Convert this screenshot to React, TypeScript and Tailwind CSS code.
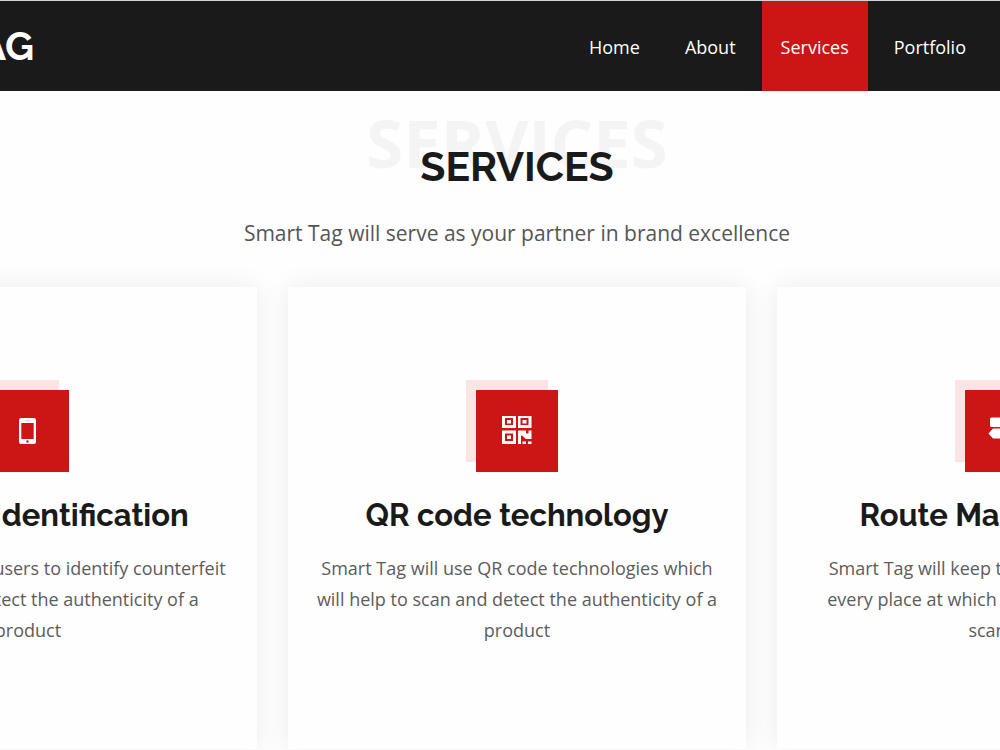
import type { ReactNode } from "react";

const heading = "font-['Raleway','Lato',sans-serif] font-bold";

const links = ["Home", "About", "Services", "Portfolio"];

function PhoneIcon() {
  return (
    <svg viewBox="0 0 30 30" className="size-[30px]" aria-hidden="true">
      <path
        fill="#fff"
        fillRule="evenodd"
        d="M8 2h12.900Q23 2 23 4.200V25.800Q23 28 20.900 28H8Q6 28 6 25.800V4.200Q6 2 8 2ZM8.300 7V23H20.700V7ZM14.500 24.300a1.200 1.200 0 1 0 0 2.400a1.200 1.200 0 1 0 0-2.400Z"
      />
      <path stroke="#f3b9b9" strokeWidth="0.8" d="M12.200 4.500h4.600" />
    </svg>
  );
}

function QrIcon() {
  return (
    <svg viewBox="0 0 30 30" className="size-[30px]" aria-hidden="true">
      <path
        fill="#fff"
        fillRule="evenodd"
        d="M0 -1H14V12H0ZM3 2V9H11V2ZM5 4H9V7.500H5ZM16 -1H29.500V12H16ZM18.500 2V9H26.500V2ZM20.500 4H24.500V7.500H20.500ZM0 14.500H14V28H0ZM3 17.500V25H11V17.500ZM5 19.500H9V23H5ZM16 14.500H24V17.500H26.500V14.500H29.500V23H24L20 19.500H19V28H16ZM20.500 25.500H24V28H20.500ZM26 25.500H29.500V28H26Z"
      />
    </svg>
  );
}

function SignsIcon() {
  return (
    <svg viewBox="0 0 36 30" className="h-[30px] w-[36px]" aria-hidden="true">
      <path
        fill="#fff"
        d="M16 0h4v1.500h10l5 4.750-5 4.750H3.500Q2 11 2 9.500V3Q2 1.500 3.500 1.500H16ZM5 12.500h27q1.500 0 1.500 1.500v7q0 1.500-1.500 1.500H20v7.500h-4v-7.500H5L.5 17.500Z"
      />
    </svg>
  );
}

function Card({ icon, title, lines }: { icon: ReactNode; title: string; lines: string[] }) {
  return (
    <article className="flex w-[458px] shrink-0 flex-col items-center bg-[#fefefe] pt-[103px] pb-[103px] shadow-[0_0_25px_0_rgba(18,18,18,0.08)]">
      <div className="relative size-[82px]">
        <div className="absolute -top-[10px] -left-[10px] size-[82px] bg-[#fbe4e4]" />
        <div className="relative flex size-[82px] items-center justify-center bg-[#cc1616]">{icon}</div>
      </div>
      <h3 className={`${heading} mt-6 text-[31px] leading-[38px] whitespace-nowrap text-[#1a1a1a]`}>{title}</h3>
      <p className="mt-[19px] text-center text-[18px] leading-[31px] whitespace-nowrap text-[#5c5c5c]">
        {lines.map((line) => (
          <span key={line} className="block">
            {line}
          </span>
        ))}
      </p>
    </article>
  );
}

export default function App() {
  return (
    <div className="min-h-screen overflow-hidden bg-[#fefefe] font-['Open_Sans',sans-serif]">
      <header className="flex h-[91px] items-stretch justify-between border-t border-[#cfd4d8] bg-[#1a1a1a]">
        <div className="flex w-[34px] items-center justify-end">
          <a href="#home" className={`${heading} text-[40px] leading-none whitespace-nowrap text-white`}>
            SMART TAG
          </a>
        </div>
        <nav className="flex items-stretch gap-[7px] pr-[15px] text-[18px] text-white">
          {links.map((link) => (
            <a
              key={link}
              href={`#${link.toLowerCase()}`}
              className={`flex items-center px-[19px] pt-[2px] ${link === "Services" ? "bg-[#cc1616]" : ""}`}
            >
              {link}
            </a>
          ))}
        </nav>
      </header>
      <main className="pl-[34px]">
        <div className="flex flex-col items-center pt-[56px]">
          <div className="relative">
            <span className="absolute top-[-43px] left-1/2 -translate-x-1/2 text-[67px] leading-[76px] font-bold text-[#f4f4f4]" aria-hidden="true">
              SERVICES
            </span>
            <h2 className={`${heading} relative text-[41px] leading-[40px] text-[#1a1a1a]`}>SERVICES</h2>
          </div>
          <p className="mt-[30px] text-[21px] leading-[32px] text-[#555]">
            Smart Tag will serve as your partner in brand excellence
          </p>
        </div>
        <section className="mt-[38px] flex justify-center gap-[31px]">
          <Card
            icon={<PhoneIcon />}
            title="Product Identification"
            lines={["Smart Tag will help users to identify counterfeit", "products and detect the authenticity of a", "product"]}
          />
          <Card
            icon={<QrIcon />}
            title="QR code technology"
            lines={["Smart Tag will use QR code technologies which", "will help to scan and detect the authenticity of a", "product"]}
          />
          <Card
            icon={<SignsIcon />}
            title="Route Management"
            lines={["Smart Tag will keep track of the product at", "every place at which the product code gets", "scanned."]}
          />
        </section>
      </main>
    </div>
  );
}
